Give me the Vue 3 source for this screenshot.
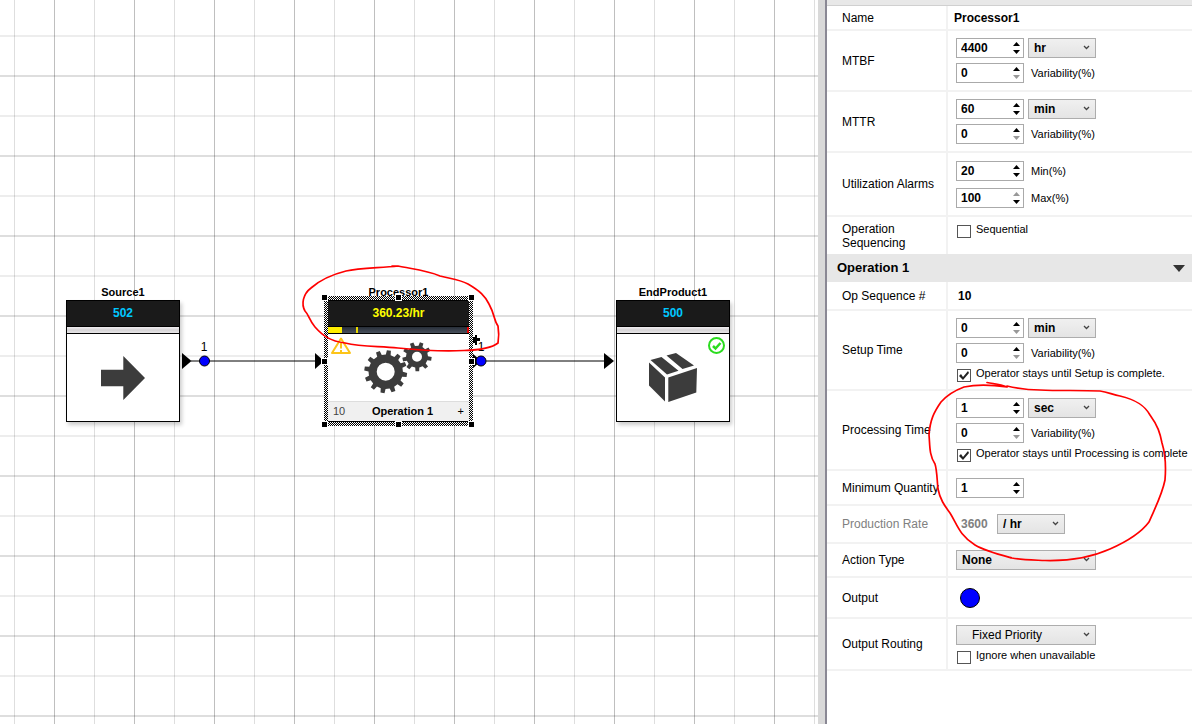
<script setup>
import { reactive } from 'vue'

const num = (id, label, value, atLimit = '') => ({ kind: 'number', id, label, value, atLimit })
const unit = (id, label, value, options) => ({ kind: 'select', id, label, value, options })
const note = (text, target) => ({ kind: 'note', text, target })
const check = (id, text, value) => ({ kind: 'check', id, text, value })
const times = ['sec', 'min', 'hr']

const general = reactive([
  { label: 'Name', size: 'title', lines: [[{ kind: 'text', value: 'Processor1', flush: true }]] },
  {
    label: 'MTBF', size: 'time', lines: [
      [num('mtbf', 'MTBF', 4400), unit('mtbf-unit', 'MTBF unit', 'hr', times)],
      [num('mtbf-var', '', 0, 'down'), note('Variability(%)', 'mtbf-var')]
    ]
  },
  {
    label: 'MTTR', size: 'time', lines: [
      [num('mttr', 'MTTR', 60), unit('mttr-unit', 'MTTR unit', 'min', times)],
      [num('mttr-var', '', 0, 'down'), note('Variability(%)', 'mttr-var')]
    ]
  },
  {
    label: 'Utilization Alarms', size: 'alarm', lines: [
      [num('util-min', '', 20), note('Min(%)', 'util-min')],
      [num('util-max', '', 100, 'up'), note('Max(%)', 'util-max')]
    ]
  },
  { label: 'Operation Sequencing', size: 'sequencing', lines: [[check('sequential', 'Sequential', false)]] }
])

const operation = reactive([
  { label: 'Op Sequence #', size: 'sequence', lines: [[{ kind: 'text', value: '10' }]] },
  {
    label: 'Setup Time', size: 'time', lines: [
      [num('setup', 'Setup time', 0, 'down'), unit('setup-unit', 'Setup time unit', 'min', times)],
      [num('setup-var', '', 0, 'down'), note('Variability(%)', 'setup-var')],
      [check('setup-stay', 'Operator stays until Setup is complete.', true)]
    ]
  },
  {
    label: 'Processing Time', size: 'time', lines: [
      [num('proc', 'Processing time', 1), unit('proc-unit', 'Processing time unit', 'sec', times)],
      [num('proc-var', '', 0, 'down'), note('Variability(%)', 'proc-var')],
      [check('proc-stay', 'Operator stays until Processing is complete', true)]
    ]
  },
  { label: 'Minimum Quantity', size: 'quantity', lines: [[num('min-qty', 'Minimum quantity', 1)]] },
  {
    label: 'Production Rate', size: 'rate', muted: true, lines: [
      [{ kind: 'rate', value: '3600' }, unit('rate-unit', 'Production rate unit', '/ hr', ['/ min', '/ hr'])]
    ]
  },
  { label: 'Action Type', size: 'action', lines: [[{ ...unit('action', 'Action type', 'None', ['None']), wide: true }]] },
  { label: 'Output', size: 'output', lines: [[{ kind: 'dot' }]] },
  {
    label: 'Output Routing', size: 'routing', lines: [
      [{ ...unit('routing', 'Output routing', 'Fixed Priority', ['Fixed Priority']), wide: true, plain: true }],
      [check('ignore', 'Ignore when unavailable', false)]
    ]
  }
])

const sections = [{ title: '', rows: general }, { title: 'Operation 1', rows: operation }]

const step = (item, by) => { item.value = Number(item.value) + by }

// Outline of a toothed wheel with a round hole, for an even-odd fill.
function gear(cx, cy, outer, inner, hole, teeth, turn) {
  const pitch = (Math.PI * 2) / teeth
  const at = (r, a) => `${(cx + r * Math.cos(a)).toFixed(2)},${(cy + r * Math.sin(a)).toFixed(2)}`
  const points = []
  for (let i = 0; i < teeth; i++) {
    const a = turn + i * pitch
    points.push(at(inner, a - pitch * 0.27), at(outer, a - pitch * 0.18), at(outer, a + pitch * 0.18), at(inner, a + pitch * 0.27))
  }
  return `M${points.join('L')}Z M${cx - hole},${cy} a${hole},${hole} 0 1,0 ${hole * 2},0 a${hole},${hole} 0 1,0 ${-hole * 2},0Z`
}
const bigGear = gear(385.7, 371.7, 21.5, 17.2, 9, 12, 0.15)
const smallGear = gear(417, 356.7, 14.7, 11, 5, 9, 0.15)
const handles = [[324, 297], [398, 297], [471, 297], [324, 361], [471, 361], [324, 424], [398, 424], [471, 424]]
</script>

<template>
  <div class="app">
    <main class="canvas">
      <svg class="layer" aria-hidden="true">
        <path d="M191 361H315M486 361H605" stroke="#000" />
        <path d="M182 353L191.500 361L182 369ZM315 353L324 361L315 369ZM472 353L481 361L472 369ZM604 353L614 361L604 369Z" />
        <circle cx="204.500" cy="361" r="5" fill="#00f" stroke="#000" />
        <circle cx="481" cy="361" r="5" fill="#00f" stroke="#000" />
      </svg>
      <span class="count count-source">1</span>
      <span class="count count-processor">1</span>

      <article class="node source">
        <h2>Source1</h2>
        <div class="card">
          <div class="value">502</div>
          <div class="meter"></div>
          <div class="body"></div>
        </div>
      </article>

      <article class="node processor">
        <h2>Processor1</h2>
        <div class="selection">
          <div class="card">
            <div class="value">360.23/hr</div>
            <div class="meter usage"><i class="used"></i><i class="mark"></i><i class="limit"></i></div>
            <div class="body"></div>
            <footer><span>10</span><b>Operation 1</b><button type="button" aria-label="Add operation">+</button></footer>
          </div>
        </div>
      </article>

      <article class="node product">
        <h2>EndProduct1</h2>
        <div class="card">
          <div class="value">500</div>
          <div class="meter"></div>
          <div class="body"></div>
        </div>
      </article>

      <svg class="layer" aria-hidden="true">
        <path d="M101 369.700H123.300V356L145 378L123.300 400V386.300H101Z" fill="#3c3c3c" />
        <g fill="#3c3c3c" fill-rule="evenodd">
          <path :d="smallGear" />
          <path :d="bigGear" stroke="#fff" stroke-width="1" paint-order="stroke" />
        </g>
        <g fill="none" stroke="#fcc419" stroke-width="2" stroke-linejoin="round">
          <path d="M341 338.500L350 353H332Z" />
          <path d="M341 343V348.500M341 350V352" />
        </g>
        <path fill="#3c3c3c" d="M649 362.500L665 377.500V401.500L649 385.500ZM668.300 377.500L697 368L696.300 392.500L668.300 402ZM650.500 360L661.500 357L678.500 370.700L667 374.500ZM666.500 355.500L676 353L694 365.500L682.500 369Z" />
        <circle cx="716.500" cy="345.500" r="7.500" fill="none" stroke="#2bdc1f" stroke-width="2" />
        <path d="M713 346L715.500 348.500L720.500 343" fill="none" stroke="#2bdc1f" stroke-width="2.500" />
        <path d="M473 337H475V335H477V338H480V341H477V345H475V343H473Z" />
        <rect v-for="([x, y], i) in handles" :key="i" :x="x - 2.5" :y="y - 2.5" width="6" height="6" stroke="#fff" />
        <path class="ink" d="M392 266L398 266C412 269 426 270 440 276C451 279 458 279 468 284C480 291 485 296 489 304C495 315 494 321 498 326C499 332 499 337 498 343C492 348 480 350 464 350.500C440 352 418 350 398 348C378 346 362 347 345 343C330 341 323 336 315 327C309 320 309 315 305 311C301 304 303 294 311 288C320 280 334 274 346 271C360 268 380 268 398 266" />
      </svg>
    </main>

    <div class="splitter"></div>

    <aside class="panel">
      <div class="panel-top"></div>
      <section v-for="section in sections" :key="section.title">
        <h3 v-if="section.title">
          {{ section.title }}
          <button type="button" aria-label="Collapse section"><svg width="12" height="7"><path d="M0 0H12L6 7Z" fill="#333" /></svg></button>
        </h3>
        <div v-for="row in section.rows" :key="row.label" class="row" :class="[row.size, { muted: row.muted }]">
          <div class="name">{{ row.label }}</div>
          <div class="fields">
            <div v-for="(line, l) in row.lines" :key="l" class="line">
              <template v-for="(item, n) in line" :key="n">
                <span v-if="item.kind === 'text'" class="text">{{ item.value }}</span>
                <span v-else-if="item.kind === 'rate'" class="rate-value">{{ item.value }}</span>
                <span v-else-if="item.kind === 'dot'" class="dot"></span>
                <label v-else-if="item.kind === 'note'" class="note" :for="item.target">{{ item.text }}</label>
                <span v-else-if="item.kind === 'number'" class="spin">
                  <input :id="item.id" v-model="item.value" type="number" :aria-label="item.label || null">
                  <span class="steps">
                    <button type="button" aria-label="Increase" :disabled="item.atLimit === 'up'" @click="step(item, 1)"><svg width="7" height="4"><path d="M0 4L3.500 0L7 4Z" /></svg></button>
                    <button type="button" aria-label="Decrease" :disabled="item.atLimit === 'down'" @click="step(item, -1)"><svg width="7" height="4"><path d="M0 0L3.500 4L7 0Z" /></svg></button>
                  </span>
                </span>
                <span v-else-if="item.kind === 'select'" class="pick" :class="{ wide: item.wide, plain: item.plain }">
                  <select :id="item.id" v-model="item.value" :aria-label="item.label">
                    <option v-for="o in item.options" :key="o">{{ o }}</option>
                  </select>
                  <svg width="7" height="5" aria-hidden="true"><path d="M1 1L3.500 3.500L6 1" fill="none" stroke="#444" stroke-width="1.300" /></svg>
                </span>
                <label v-else class="check"><input :id="item.id" v-model="item.value" type="checkbox"><span>{{ item.text }}</span></label>
              </template>
            </div>
          </div>
        </div>
      </section>
      <svg class="layer" aria-hidden="true">
        <path class="ink" transform="translate(-827 0)" d="M987 382.500C995 384 1000 384 1007 387M1007 386C1020 389 1030 390 1040 390C1060 391 1080 390 1100 391C1108 392 1113 395 1120 396C1137 400 1145 406 1150 415C1158 426 1160 433 1162 443C1166 456 1166 468 1165 480C1162 495 1155 508 1149 522C1140 534 1126 542 1110 549C1090 558 1065 561 1045 560.500C1033 560 1021 560 1012 558C997 554 985 551 975 545C959 535 957 524 950 513C944 505 940 499 938 489C937 480 937 470 935 464C929 455 930 445 929 435C930 420 934 412 941 402C948 394 956 390 964 387C978 384 993 385 1007 387" />
      </svg>
    </aside>
  </div>
</template>

<style>
body { margin: 0; }
</style>

<style scoped>
* { box-sizing: border-box; }
.app { display: flex; min-height: 100vh; font: 12px/14px "Liberation Sans", Arial, sans-serif; color: #000; background: #fff; }
button, input, select { font: inherit; color: inherit; margin: 0; padding: 0; }
button { border: 0; background: none; display: flex; align-items: center; justify-content: center; }
.layer { position: absolute; inset: 0; width: 100%; height: 100%; pointer-events: none; }
.ink { fill: none; stroke: #f00; stroke-width: 1.7; stroke-linecap: round; }

.canvas {
  position: relative; flex: 1; min-width: 0; overflow: hidden;
  background-color: #fff;
  background-image:
    linear-gradient(90deg, rgba(0,0,0,.13) 1px, transparent 1px),
    linear-gradient(90deg, rgba(0,0,0,.25) 1px, transparent 1px),
    linear-gradient(rgba(0,0,0,.07) 2px, transparent 2px),
    linear-gradient(rgba(0,0,0,.13) 2px, transparent 2px);
  background-size: 80px 80px;
  background-position: 14px 0, 54px 0, 0 35px, 0 75px;
}
.count { position: absolute; top: 340px; width: 10px; text-align: center; }
.count-source { left: 199px; }
.count-processor { left: 476px; }

.node { position: absolute; top: 285px; width: 114px; }
.source { left: 66px; }
.processor { left: 324px; width: 149px; }
.product { left: 616px; }
.node h2 { margin: 0 0 1px; font-size: 11px; line-height: 14px; text-align: center; }
.card { border: 1px solid #000; background: #fff; box-shadow: 2px 3px 4px rgba(0,0,0,.2); }
.value { height: 25px; line-height: 24px; font-weight: bold; text-align: center; color: #00c8ff; background: #1a1a1a; }
.meter { height: 8px; border: solid #000; border-width: 1px 0; background: linear-gradient(#f0eef0, #d5d3d5 50%, #e8e6e8); }
.body { height: 87px; }
.processor .value { color: #ff0; }
.processor h2 { margin: 0 0 -3px; }
.selection { padding: 4px; background: repeating-conic-gradient(#000 0 25%, #fff 0 50%) 0 0 / 2px 2px; }
.selection .card { box-shadow: none; border-width: 1px 0; }
.selection .body { height: 67px; }
.usage { position: relative; background: linear-gradient(#272e38, #48505c); }
.usage i { position: absolute; top: 0; bottom: 0; }
.used { left: 0; width: 10%; background: #ffee00; }
.mark { left: 20%; width: 2px; background: #e8d800; }
.limit { right: 0; width: 2px; background: #e00000; }
footer { display: grid; grid-template-columns: 36px 1fr 28px; align-items: center; height: 20px; padding: 0 5px 1px; border-top: 1px solid #ddd; background: #f0f0f0; font-size: 11px; line-height: 12px; text-align: center; }
footer span { color: #444; text-align: left; }
footer button { justify-content: flex-end; }

.splitter { flex: 0 0 9px; background: #d9d9d9; border-right: 2px solid #8a8894; }
.panel { position: relative; flex: 0 0 365px; overflow: hidden; }
.panel-top { height: 6px; background: #e8e8e8; border-bottom: 1px solid #d0d0d0; }
h3 { display: flex; align-items: center; justify-content: space-between; height: 28px; margin: 0; padding: 0 7px 0 10px; font-size: 13px; background: #e7e7e7; }
.row { display: flex; border-bottom: 2px solid #f2f2f2; }
.name { flex: 0 0 121px; display: flex; align-items: center; padding-left: 15px; border-right: 2px solid #f2f2f2; white-space: nowrap; }
.fields { flex: 1; min-width: 0; display: grid; align-content: start; row-gap: 5px; padding: 7px 0 7px 8px; }
.line { display: flex; align-items: center; white-space: nowrap; }
.title .fields { padding: 5px 0 4px 6px; }
.title .text { margin-left: 0; }
.alarm .fields { row-gap: 7px; padding-top: 8px; }
.sequencing { border-bottom: 0; }
.sequencing .name { white-space: normal; padding-right: 30px; }
.sequencing .fields { padding-bottom: 16px; }
.sequence .fields { padding-bottom: 6px; }
.quantity .fields { padding-bottom: 6px; }
.rate .fields { padding-top: 8px; padding-bottom: 8px; }
.action .fields, .routing .fields { padding-top: 6px; padding-bottom: 6px; }
.output .fields { padding-top: 10px; padding-bottom: 9px; }
.muted .name, .rate-value { color: #808080; }
.text { font-weight: bold; margin-left: 2px; }
.rate-value { width: 41px; padding-left: 5px; font-weight: bold; }
.note { margin-left: 7px; font-size: 11px; }
.dot { width: 20px; height: 20px; margin-left: 4px; border: 1px solid #000; border-radius: 50%; background: #00f; }

.spin { display: flex; width: 68px; height: 20px; border: 1px solid #aaa; background: #fff; }
.spin input { flex: 1; min-width: 0; padding-left: 4px; border: 0; outline: 0; background: none; font-weight: bold; appearance: textfield; }
.spin input::-webkit-inner-spin-button { appearance: none; margin: 0; }
.steps { display: flex; flex-direction: column; justify-content: space-evenly; width: 13px; }
.steps button { height: 8px; }
.steps button:disabled { opacity: .4; }
.pick { position: relative; width: 68px; height: 20px; }
.spin + .pick { margin-left: 4px; }
.pick.wide { width: 140px; }
.pick select { display: block; width: 100%; height: 100%; padding-left: 5px; border: 1px solid #adadad; border-radius: 0; background: linear-gradient(#f0f0f0, #e4e4e4); font-weight: bold; appearance: none; }
.pick.plain select { padding-left: 15px; font-weight: normal; }
.pick svg { position: absolute; right: 6px; top: 7px; pointer-events: none; }
.check { display: flex; height: 14px; padding-left: 1px; font-size: 11px; line-height: 10px; }
.routing .check { height: 13px; }
.check input { flex: none; width: 14px; height: 13px; margin: 1px 5px 0 0; border: 1px solid #555; background: #fff; appearance: none; }
.check input:checked::before { content: ""; display: block; width: 12px; height: 11px; background: #222; clip-path: polygon(1px 6px, 3px 4px, 5px 7px, 10px 1px, 11px 3px, 5px 10px); }
</style>
